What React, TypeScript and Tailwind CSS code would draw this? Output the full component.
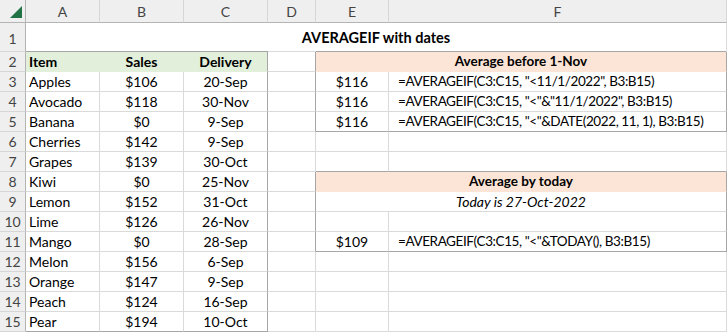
import React from 'react';

const FONT = { fontFamily: 'Lato, "Liberation Sans", sans-serif' };

const RB: Record<string, string> = {
  d: 'border-r-[#a6a6a6]',
  l: 'border-r-[#dadada]',
  g: 'border-r-[#e2efda]',
  p: 'border-r-[#fce4d6]',
};
const BB: Record<string, string> = {
  d: 'border-b-[#a6a6a6]',
  l: 'border-b-[#dadada]',
  g: 'border-b-[#e2efda]',
  p: 'border-b-[#fce4d6]',
};

type CellProps = {
  w: string;
  r?: string;
  b?: string;
  bg?: string;
  align?: 'left' | 'center';
  className?: string;
  children?: React.ReactNode;
};

function Cell({ w, r = 'l', b = 'l', bg = 'bg-white', align = 'center', className = 'text-[14px]', children }: CellProps) {
  return (
    <div
      className={`${w} h-full shrink-0 box-border border-r border-b ${RB[r]} ${BB[b]} ${bg} flex items-center ${
        align === 'left' ? 'justify-start pl-[3px]' : 'justify-center'
      } whitespace-nowrap overflow-visible text-black ${className}`}
    >
      {children}
    </div>
  );
}

function RowHead({ n, end = false }: { n: number; end?: boolean }) {
  return (
    <div
      className={`w-[26px] h-full shrink-0 box-border border-r border-b border-r-[#b4b4b4] border-b-[#d6d6d6] bg-[#efefef] flex justify-center ${
        end ? 'items-end pb-[2px]' : 'items-center'
      } text-[14px] text-[#444444]`}
    >
      {n}
    </div>
  );
}

const data: [string, string, string][] = [
  ['Apples', '$106', '20-Sep'],
  ['Avocado', '$118', '30-Nov'],
  ['Banana', '$0', '9-Sep'],
  ['Cherries', '$142', '9-Sep'],
  ['Grapes', '$139', '30-Oct'],
  ['Kiwi', '$0', '25-Nov'],
  ['Lemon', '$152', '31-Oct'],
  ['Lime', '$126', '26-Nov'],
  ['Mango', '$0', '28-Sep'],
  ['Melon', '$156', '6-Sep'],
  ['Orange', '$147', '9-Sep'],
  ['Peach', '$124', '16-Sep'],
  ['Pear', '$194', '10-Oct'],
];

function RightSide({ row }: { row: number }) {
  const boxRows = [2, 3, 4, 5, 8, 9, 10, 11];
  const dRight = boxRows.includes(row) ? 'd' : 'l';
  const D = <Cell w="w-[48px]" r={dRight} />;
  if (row === 2 || row === 8) {
    return (
      <>
        {D}
        <Cell w="w-[411px]" r="d" b="p" bg="bg-[#fce4d6]" className="font-bold text-[13.5px]">
          {row === 2 ? 'Average before 1-Nov' : 'Average by today'}
        </Cell>
      </>
    );
  }
  if (row === 9) {
    return (
      <>
        {D}
        <Cell w="w-[411px]" r="d" className="italic text-[14px]">
          Today is 27-Oct-2022
        </Cell>
      </>
    );
  }
  const formulas: Record<number, [string, string]> = {
    3: ['$116', '=AVERAGEIF(C3:C15, "<11/1/2022", B3:B15)'],
    4: ['$116', '=AVERAGEIF(C3:C15, "<"&"11/1/2022", B3:B15)'],
    5: ['$116', '=AVERAGEIF(C3:C15, "<"&DATE(2022, 11, 1), B3:B15)'],
    11: ['$109', '=AVERAGEIF(C3:C15, "<"&TODAY(), B3:B15)'],
  };
  const f = formulas[row];
  const bottom = row === 5 || row === 7 || row === 11 ? 'd' : 'l';
  const fRight = boxRows.includes(row) ? 'd' : 'l';
  return (
    <>
      {D}
      <Cell w="w-[73px]" b={bottom}>
        {f ? f[0] : ''}
      </Cell>
      <Cell
        w="w-[338px]"
        r={fRight}
        b={bottom}
        align="left"
        className="pl-[9px] text-[13.5px] tracking-[-0.4px]"
      >
        {f ? f[1] : ''}
      </Cell>
    </>
  );
}

export default function App() {
  const cols = [
    { l: 'A', w: 'w-[74px]' },
    { l: 'B', w: 'w-[84px]' },
    { l: 'C', w: 'w-[84px]' },
    { l: 'D', w: 'w-[48px]' },
    { l: 'E', w: 'w-[73px]' },
    { l: 'F', w: 'w-[338px]' },
  ];
  return (
    <div className="w-[727px] h-[332px] overflow-hidden bg-white" style={FONT}>
      {/* column headers */}
      <div className="flex h-[23px]">
        <div className="w-[26px] h-full shrink-0 box-border border-r border-b border-r-[#b4b4b4] border-b-[#b4b4b4] bg-[#efefef] flex items-start justify-start">
          <svg width="25" height="22" viewBox="0 0 25 22" className="block">
            <polygon points="22,6 22,18 10,18" fill="#217346" />
          </svg>
        </div>
        {cols.map((c) => (
          <div
            key={c.l}
            className={`${c.w} h-full shrink-0 box-border border-r border-b border-r-[#d6d6d6] border-b-[#b4b4b4] bg-[#efefef] flex items-center justify-center text-[14px] text-[#444444] pt-[1px]`}
          >
            {c.l}
          </div>
        ))}
        <div className="flex-1 h-full box-border border-b border-b-[#b4b4b4] bg-[#efefef]" />
      </div>

      {/* row 1 */}
      <div className="flex h-[29px]">
        <RowHead n={1} end />
        <div className="w-[701px] h-full shrink-0 box-border border-r border-r-[#dadada] flex flex-col">
          <div className="flex-1 flex items-center justify-center font-bold text-[14.5px] text-black pt-[1px]">
            AVERAGEIF with dates
          </div>
          <div className="flex h-[1px]">
            <div className="w-[242px] bg-[#a6a6a6]" />
            <div className="w-[48px] bg-[#dadada]" />
            <div className="w-[410px] bg-[#a6a6a6]" />
          </div>
        </div>
      </div>

      {/* row 2 */}
      <div className="flex h-[20px]">
        <RowHead n={2} />
        <Cell w="w-[74px]" r="g" b="g" bg="bg-[#e2efda]" align="left" className="font-bold text-[14px]">
          Item
        </Cell>
        <Cell w="w-[84px]" r="g" b="g" bg="bg-[#e2efda]" className="font-bold text-[14px]">
          Sales
        </Cell>
        <Cell w="w-[84px]" r="d" b="g" bg="bg-[#e2efda]" className="font-bold text-[14px]">
          Delivery
        </Cell>
        <RightSide row={2} />
      </div>

      {data.map((d, i) => {
        const row = i + 3;
        const last = row === 15;
        return (
          <div key={row} className="flex h-[20px]">
            <RowHead n={row} />
            <Cell w="w-[74px]" b={last ? 'd' : 'l'} align="left">
              {d[0]}
            </Cell>
            <Cell w="w-[84px]" b={last ? 'd' : 'l'}>
              {d[1]}
            </Cell>
            <Cell w="w-[84px]" r="d" b={last ? 'd' : 'l'}>
              {d[2]}
            </Cell>
            <RightSide row={row} />
          </div>
        );
      })}
    </div>
  );
}
